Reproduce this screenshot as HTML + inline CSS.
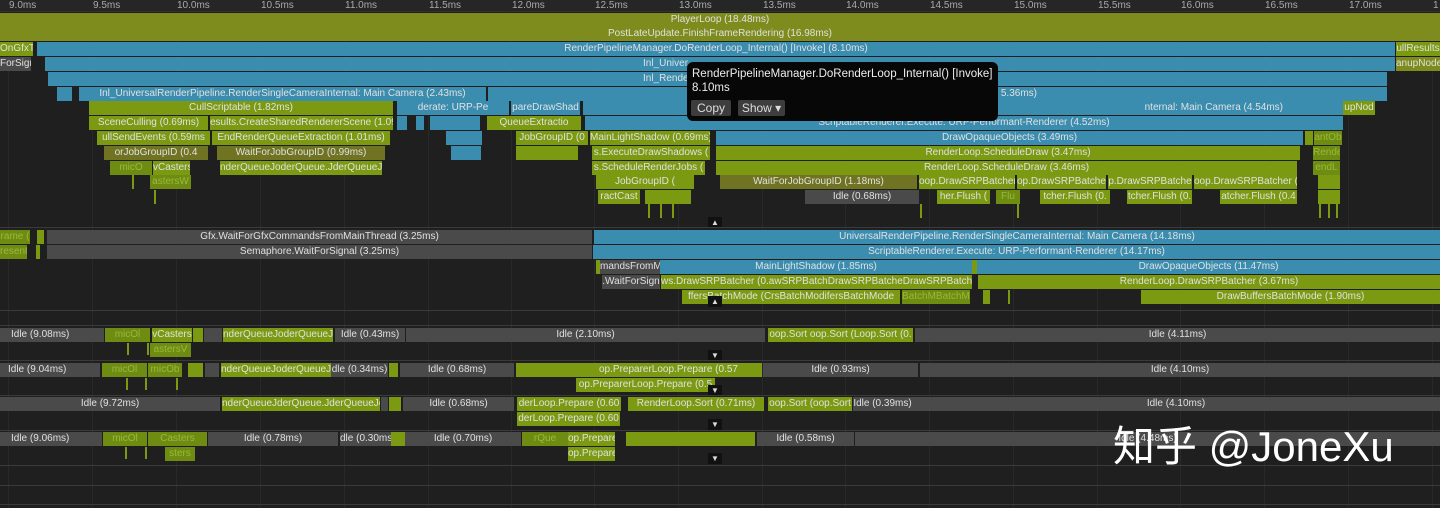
<!DOCTYPE html>
<html><head><meta charset="utf-8"><style>
body{margin:0;width:1440px;height:508px;background:#1f1f1f;overflow:hidden;position:relative;font-family:"Liberation Sans",sans-serif}
i{position:absolute;height:14px;font:normal 10px/14px "Liberation Sans",sans-serif;color:#e0e0e0;text-align:center;overflow:hidden;white-space:nowrap;box-sizing:border-box;display:block}
.g{background:#7b9a12}.o{background:#7d8c1c}.u{background:#3b8db0}.d{background:#4a4a4a}.w{background:#6f7322}.m{background:#6e8c12;color:#9ab83a}
.v{position:absolute;top:11px;bottom:0;width:1px;background:#292929}
.h{position:absolute;left:0;width:1440px;height:1px;background:#3a3a3a}
.t{position:absolute;width:2px;background:#7b9a12}
.r{position:absolute;top:0;font-size:10px;color:#aaa;line-height:11px}
.a{position:absolute;width:14px;height:11px;background:#111;color:#ddd;font-size:8px;line-height:11px;text-align:center}
</style></head><body>
<div style="position:absolute;left:0;top:0;width:1440px;height:11px;background:#262626;border-bottom:1px solid #333"></div>
<div class="v" style="left:8px"></div><div class="v" style="left:92px"></div><div class="v" style="left:176px"></div><div class="v" style="left:260px"></div><div class="v" style="left:344px"></div><div class="v" style="left:428px"></div><div class="v" style="left:511px"></div><div class="v" style="left:594px"></div><div class="v" style="left:678px"></div><div class="v" style="left:762px"></div><div class="v" style="left:845px"></div><div class="v" style="left:929px"></div><div class="v" style="left:1013px"></div><div class="v" style="left:1097px"></div><div class="v" style="left:1180px"></div><div class="v" style="left:1264px"></div><div class="v" style="left:1348px"></div><div class="v" style="left:1432px"></div>
<span class="r" style="left:9px">9.0ms</span><span class="r" style="left:93px">9.5ms</span><span class="r" style="left:177px">10.0ms</span><span class="r" style="left:261px">10.5ms</span><span class="r" style="left:345px">11.0ms</span><span class="r" style="left:429px">11.5ms</span><span class="r" style="left:512px">12.0ms</span><span class="r" style="left:595px">12.5ms</span><span class="r" style="left:679px">13.0ms</span><span class="r" style="left:763px">13.5ms</span><span class="r" style="left:846px">14.0ms</span><span class="r" style="left:930px">14.5ms</span><span class="r" style="left:1014px">15.0ms</span><span class="r" style="left:1098px">15.5ms</span><span class="r" style="left:1181px">16.0ms</span><span class="r" style="left:1265px">16.5ms</span><span class="r" style="left:1349px">17.0ms</span><span class="r" style="left:1433px">1</span>

<i class="o" style="left:0;top:13px;width:1440px">PlayerLoop (18.48ms)</i>
<i class="o" style="left:0;top:27px;width:1440px">PostLateUpdate.FinishFrameRendering (16.98ms)</i>
<i class="g" style="left:0;top:42px;width:33px">OnGfxT</i>
<i class="u" style="left:37px;top:42px;width:1358px">RenderPipelineManager.DoRenderLoop_Internal() [Invoke] (8.10ms)</i>
<i class="g" style="left:1396px;top:42px;width:44px">ullResults</i>
<i class="d" style="left:0;top:57px;width:31px">ForSigr</i>
<i class="u" style="left:45px;top:57px;width:1350px;text-align:left;padding-left:598px">Inl_Univer</i>
<i class="o" style="left:1396px;top:57px;width:44px">anupNode</i>
<i class="u" style="left:48px;top:72px;width:1339px;text-align:left;padding-left:595px">Inl_Render</i>
<i class="u" style="left:57px;top:87px;width:15px"></i>
<i class="u" style="left:79px;top:87px;width:407px">Inl_UniversalRenderPipeline.RenderSingleCameraInternal: Main Camera (2.43ms)</i>
<i class="u" style="left:488px;top:87px;width:899px;text-align:right;padding-right:350px">5.36ms)</i>
<i class="g" style="left:89px;top:101px;width:304px">CullScriptable (1.82ms)</i>
<i class="u" style="left:397px;top:101px;width:112px">derate: URP-Pe</i>
<i class="u" style="left:511px;top:101px;width:69px">pareDrawShad</i>
<i class="u" style="left:583px;top:101px;width:760px;text-align:right;padding-right:60px">nternal: Main Camera (4.54ms)</i>
<i class="g" style="left:1343px;top:101px;width:32px">upNod</i>
<i class="g" style="left:89px;top:116px;width:119px">SceneCulling (0.69ms)</i>
<i class="g" style="left:210px;top:116px;width:183px">esults.CreateSharedRendererScene (1.09</i>
<i class="u" style="left:397px;top:116px;width:10px"></i><i class="u" style="left:416px;top:116px;width:8px"></i><i class="u" style="left:430px;top:116px;width:50px"></i>
<i class="g" style="left:487px;top:116px;width:94px">QueueExtractio</i>
<i class="u" style="left:585px;top:116px;width:758px">ScriptableRenderer.Execute: URP-Performant-Renderer (4.52ms)</i>
<i class="g" style="left:97px;top:131px;width:113px">ullSendEvents (0.59ms</i>
<i class="g" style="left:212px;top:131px;width:178px">EndRenderQueueExtraction (1.01ms)</i>
<i class="u" style="left:446px;top:131px;width:36px"></i>
<i class="g" style="left:516px;top:131px;width:72px">JobGroupID (0</i>
<i class="g" style="left:590px;top:131px;width:120px">MainLightShadow (0.69ms)</i>
<i class="u" style="left:716px;top:131px;width:587px">DrawOpaqueObjects (3.49ms)</i>
<i class="g" style="left:1305px;top:131px;width:8px"></i><i class="m" style="left:1314px;top:131px;width:28px">antOb</i>
<i class="w" style="left:104px;top:146px;width:104px">orJobGroupID (0.4</i>
<i class="w" style="left:217px;top:146px;width:168px">WaitForJobGroupID (0.99ms)</i>
<i class="u" style="left:451px;top:146px;width:30px"></i>
<i class="g" style="left:516px;top:146px;width:62px"></i>
<i class="g" style="left:592px;top:146px;width:118px">s.ExecuteDrawShadows (</i>
<i class="g" style="left:716px;top:146px;width:584px">RenderLoop.ScheduleDraw (3.47ms)</i>
<i class="m" style="left:1313px;top:146px;width:27px">Rende</i>
<i class="m" style="left:110px;top:161px;width:42px">micO</i>
<i class="g" style="left:153px;top:161px;width:37px">vCasters</i>
<i class="g" style="left:220px;top:161px;width:162px">nderQueueJoderQueue.JderQueueJc</i>
<i class="g" style="left:592px;top:161px;width:113px">s.ScheduleRenderJobs (</i>
<i class="g" style="left:716px;top:161px;width:581px">RenderLoop.ScheduleDraw (3.46ms)</i>
<i class="m" style="left:1313px;top:161px;width:27px">endL</i>
<i class="m" style="left:150px;top:175px;width:41px">astersW</i>
<i class="g" style="left:596px;top:175px;width:98px">JobGroupID (</i>
<i class="w" style="left:720px;top:175px;width:197px">WaitForJobGroupID (1.18ms)</i>
<i class="g" style="left:919px;top:175px;width:96px">oop.DrawSRPBatcher</i>
<i class="g" style="left:1017px;top:175px;width:89px">op.DrawSRPBatcher</i>
<i class="g" style="left:1108px;top:175px;width:84px">p.DrawSRPBatche</i>
<i class="g" style="left:1194px;top:175px;width:103px">oop.DrawSRPBatcher (</i>
<i class="g" style="left:1318px;top:175px;width:22px"></i>
<i class="g" style="left:598px;top:190px;width:42px">ractCast</i>
<i class="g" style="left:645px;top:190px;width:46px"></i>
<i class="d" style="left:805px;top:190px;width:114px">Idle (0.68ms)</i>
<i class="g" style="left:937px;top:190px;width:53px">her.Flush (</i>
<i class="m" style="left:996px;top:190px;width:24px">Flu</i>
<i class="g" style="left:1040px;top:190px;width:70px">tcher.Flush (0.</i>
<i class="g" style="left:1127px;top:190px;width:65px">tcher.Flush (0.</i>
<i class="g" style="left:1220px;top:190px;width:77px">atcher.Flush (0.4</i>
<i class="g" style="left:1318px;top:190px;width:22px"></i>
<div class="t" style="left:648px;top:204px;height:14px"></div><div class="t" style="left:660px;top:204px;height:14px"></div><div class="t" style="left:672px;top:204px;height:14px"></div><div class="t" style="left:920px;top:204px;height:14px"></div><div class="t" style="left:1017px;top:204px;height:14px"></div><div class="t" style="left:1319px;top:204px;height:14px"></div><div class="t" style="left:1328px;top:204px;height:14px"></div><div class="t" style="left:1336px;top:204px;height:14px"></div>
<div class="t" style="left:132px;top:175px;height:14px"></div><div class="t" style="left:154px;top:190px;height:14px"></div>

<div style="position:absolute;left:687px;top:62px;width:311px;height:59px;background:#070707;border-radius:6px"></div>
<div style="position:absolute;left:692px;top:67px;color:#eee;font-size:11.5px;line-height:14px">RenderPipelineManager.DoRenderLoop_Internal() [Invoke]<br>8.10ms</div>
<div style="position:absolute;left:691px;top:100px;width:40px;height:16px;background:#3d3d3d;border-radius:2px;color:#ddd;font-size:12px;line-height:16px;text-align:center">Copy</div>
<div style="position:absolute;left:738px;top:100px;width:47px;height:16px;background:#3d3d3d;border-radius:2px;color:#ddd;font-size:12px;line-height:16px;text-align:center">Show ▾</div>

<div class="a" style="left:708px;top:217px">▲</div>
<div class="h" style="top:227px"></div>
<i class="m" style="left:0;top:230px;width:30px">rame (</i>
<i class="g" style="left:37px;top:230px;width:7px"></i>
<i class="d" style="left:47px;top:230px;width:545px">Gfx.WaitForGfxCommandsFromMainThread (3.25ms)</i>
<i class="u" style="left:594px;top:230px;width:846px">UniversalRenderPipeline.RenderSingleCameraInternal: Main Camera (14.18ms)</i>
<i class="m" style="left:0;top:245px;width:27px">resent</i>
<i class="g" style="left:36px;top:245px;width:4px"></i>
<i class="d" style="left:47px;top:245px;width:545px">Semaphore.WaitForSignal (3.25ms)</i>
<i class="u" style="left:593px;top:245px;width:847px">ScriptableRenderer.Execute: URP-Performant-Renderer (14.17ms)</i>
<i class="g" style="left:596px;top:260px;width:4px"></i>
<i class="d" style="left:600px;top:260px;width:60px">mandsFromM</i>
<i class="u" style="left:660px;top:260px;width:312px">MainLightShadow (1.85ms)</i>
<i class="g" style="left:972px;top:260px;width:5px"></i>
<i class="u" style="left:977px;top:260px;width:463px">DrawOpaqueObjects (11.47ms)</i>
<i class="d" style="left:602px;top:275px;width:58px">.WaitForSign</i>
<i class="g" style="left:661px;top:275px;width:311px">ws.DrawSRPBatcher (0.awSRPBatchDrawSRPBatcheDrawSRPBatcher</i>
<i class="g" style="left:978px;top:275px;width:462px">RenderLoop.DrawSRPBatcher (3.67ms)</i>
<i class="g" style="left:682px;top:290px;width:218px">ffersBatchMode (CrsBatchModifersBatchMode</i>
<i class="m" style="left:902px;top:290px;width:68px">BatchMBatchMc</i>
<i class="g" style="left:983px;top:290px;width:7px"></i>
<i class="g" style="left:1008px;top:290px;width:2px"></i>
<i class="g" style="left:1141px;top:290px;width:299px">DrawBuffersBatchMode (1.90ms)</i>
<div class="a" style="left:708px;top:296px">▲</div>
<div class="h" style="top:310px"></div>
<div class="h" style="top:325px"></div>

<i class="d" style="left:0;top:328px;width:104px;text-align:left;padding-left:11px">Idle (9.08ms)</i>
<i class="m" style="left:105px;top:328px;width:45px">micOl</i>
<i class="g" style="left:152px;top:328px;width:40px">vCasters</i>
<i class="g" style="left:193px;top:328px;width:10px"></i>
<i class="d" style="left:204px;top:328px;width:18px"></i>
<i class="g" style="left:223px;top:328px;width:110px">nderQueueJoderQueueJ</i>
<i class="d" style="left:335px;top:328px;width:70px">Idle (0.43ms)</i>
<i class="d" style="left:406px;top:328px;width:359px">Idle (2.10ms)</i>
<i class="g" style="left:768px;top:328px;width:145px">oop.Sort oop.Sort (Loop.Sort (0.</i>
<i class="d" style="left:915px;top:328px;width:525px">Idle (4.11ms)</i>
<div class="t" style="left:127px;top:343px;height:12px"></div><div class="t" style="left:147px;top:343px;height:12px"></div>
<i class="m" style="left:150px;top:343px;width:41px">astersV</i>
<div class="a" style="left:708px;top:350px">▼</div>
<div class="h" style="top:360px"></div>

<i class="d" style="left:0;top:363px;width:100px;text-align:left;padding-left:8px">Idle (9.04ms)</i>
<i class="m" style="left:102px;top:363px;width:45px">micOl</i>
<i class="m" style="left:148px;top:363px;width:34px">micOb</i>
<i class="g" style="left:188px;top:363px;width:15px"></i>
<i class="d" style="left:205px;top:363px;width:14px"></i>
<i class="g" style="left:221px;top:363px;width:110px">nderQueueJoderQueueJ</i>
<i class="d" style="left:331px;top:363px;width:57px">dle (0.34ms)</i>
<i class="g" style="left:389px;top:363px;width:9px"></i>
<i class="d" style="left:400px;top:363px;width:114px">Idle (0.68ms)</i>
<i class="g" style="left:516px;top:363px;width:59px"></i>
<i class="g" style="left:575px;top:363px;width:187px">op.PreparerLoop.Prepare (0.57</i>
<i class="d" style="left:763px;top:363px;width:155px">Idle (0.93ms)</i>
<i class="d" style="left:920px;top:363px;width:520px">Idle (4.10ms)</i>
<div class="t" style="left:126px;top:378px;height:12px"></div><div class="t" style="left:145px;top:378px;height:12px"></div><div class="t" style="left:176px;top:378px;height:12px"></div>
<i class="g" style="left:576px;top:378px;width:139px">op.PreparerLoop.Prepare (0.5</i>
<div class="a" style="left:708px;top:385px">▼</div>
<div class="h" style="top:395px"></div>

<i class="d" style="left:0;top:397px;width:220px">Idle (9.72ms)</i>
<i class="g" style="left:222px;top:397px;width:158px">nderQueueJderQueue.JderQueueJc</i>
<i class="d" style="left:381px;top:397px;width:7px"></i>
<i class="g" style="left:389px;top:397px;width:12px"></i>
<i class="d" style="left:403px;top:397px;width:111px">Idle (0.68ms)</i>
<i class="g" style="left:517px;top:397px;width:104px">derLoop.Prepare (0.60</i>
<i class="g" style="left:628px;top:397px;width:136px">RenderLoop.Sort (0.71ms)</i>
<i class="g" style="left:768px;top:397px;width:84px">oop.Sort (oop.Sort</i>
<i class="d" style="left:853px;top:397px;width:59px">Idle (0.39ms)</i>
<i class="d" style="left:912px;top:397px;width:528px">Idle (4.10ms)</i>
<i class="g" style="left:517px;top:412px;width:103px">derLoop.Prepare (0.60</i>
<div class="a" style="left:708px;top:419px">▼</div>
<div class="h" style="top:430px"></div>

<i class="d" style="left:0;top:432px;width:102px;text-align:left;padding-left:11px">Idle (9.06ms)</i>
<i class="m" style="left:103px;top:432px;width:44px">micOl</i>
<i class="m" style="left:148px;top:432px;width:59px">Casters</i>
<i class="d" style="left:208px;top:432px;width:130px">Idle (0.78ms)</i>
<i class="d" style="left:340px;top:432px;width:51px">dle (0.30ms</i>
<i class="g" style="left:391px;top:432px;width:14px"></i>
<i class="d" style="left:405px;top:432px;width:116px">Idle (0.70ms)</i>
<i class="m" style="left:522px;top:432px;width:46px">rQue</i>
<i class="g" style="left:568px;top:432px;width:47px">op.Prepare</i>
<i class="g" style="left:626px;top:432px;width:129px"></i>
<i class="d" style="left:757px;top:432px;width:97px">Idle (0.58ms)</i>
<i class="d" style="left:855px;top:432px;width:585px">Idle (4.48ms)</i>
<div class="t" style="left:125px;top:447px;height:12px"></div><div class="t" style="left:145px;top:447px;height:12px"></div>
<i class="m" style="left:165px;top:447px;width:30px">sters</i>
<i class="g" style="left:568px;top:447px;width:47px">op.Prepare</i>
<div class="a" style="left:708px;top:453px">▼</div>
<div class="h" style="top:465px"></div>
<div class="h" style="top:485px"></div>
<div class="h" style="top:504px"></div>

<div style="position:absolute;left:1113px;top:421px;color:#fff;font:42px/52px 'Liberation Sans','Noto Sans CJK SC',sans-serif;white-space:nowrap">知乎 @JoneXu</div>
</body></html>
